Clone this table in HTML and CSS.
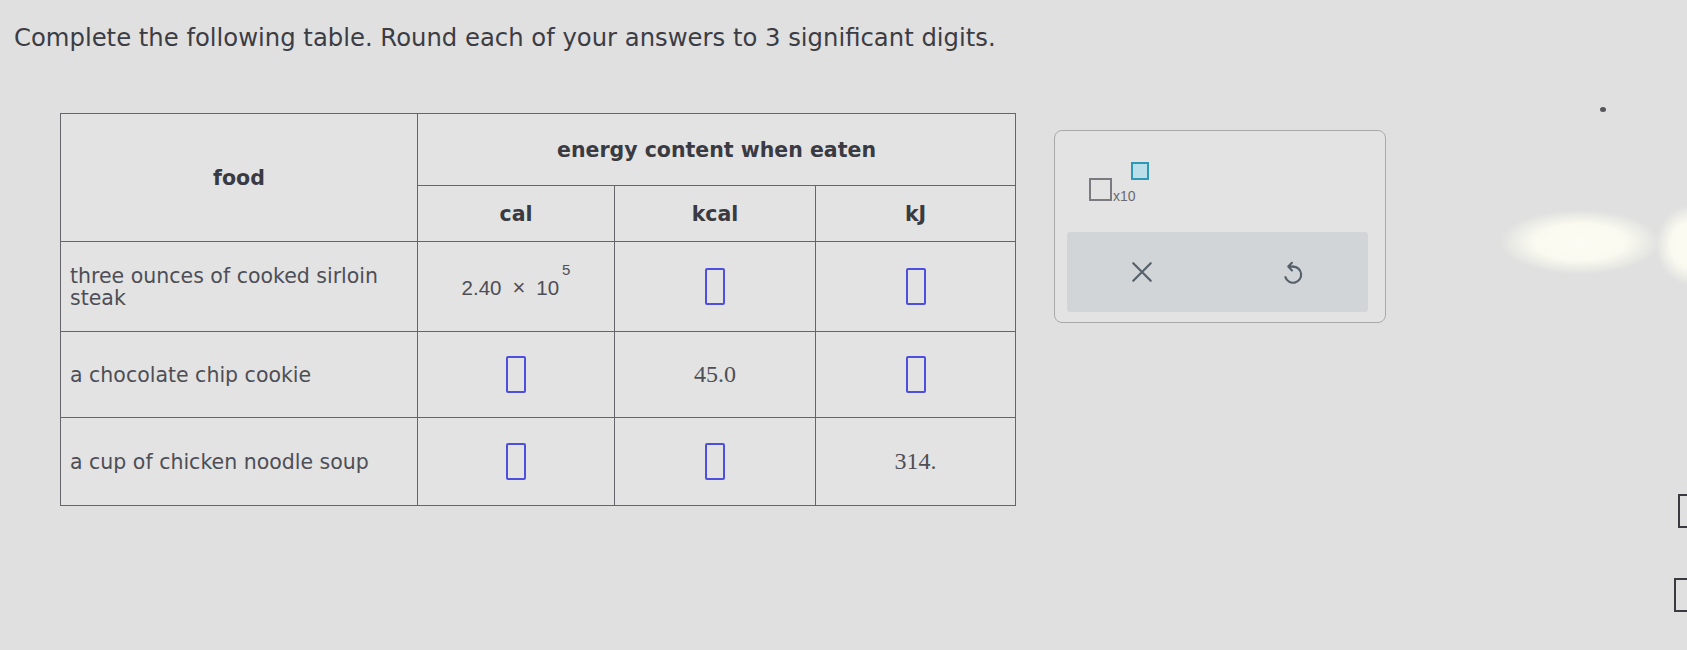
FILE: index.html
```html
<!DOCTYPE html>
<html lang="en">
<head>
<meta charset="utf-8">
<title>Energy content table</title>
<link rel="stylesheet" href="styles.css">
</head>
<body>
<p class="prompt">Complete the following table. Round each of your answers to 3 significant digits.</p>
<div class="workarea">
  <table class="grid">
    <colgroup>
      <col class="c-food"><col class="c-cal"><col class="c-kcal"><col class="c-kj">
    </colgroup>
    <thead>
      <tr class="h1">
        <th rowspan="2">food</th>
        <th colspan="3">energy content when eaten</th>
      </tr>
      <tr class="h2">
        <th>cal</th>
        <th>kcal</th>
        <th>kJ</th>
      </tr>
    </thead>
    <tbody>
      <tr class="r1">
        <td class="name">three ounces of cooked sirloin steak</td>
        <td><span class="num sans">2.40<span class="times">×</span>10<sup>5</sup></span></td>
        <td><span class="box"></span></td>
        <td><span class="box"></span></td>
      </tr>
      <tr class="r2">
        <td class="name">a chocolate chip cookie</td>
        <td><span class="box"></span></td>
        <td><span class="num serif">45.0</span></td>
        <td><span class="box"></span></td>
      </tr>
      <tr class="r3">
        <td class="name">a cup of chicken noodle soup</td>
        <td><span class="box"></span></td>
        <td><span class="box"></span></td>
        <td><span class="num serif">314.</span></td>
      </tr>
    </tbody>
  </table>

  <div class="panel">
    <div class="sci">
      <span class="sq"></span><span class="x10">x10</span><span class="sup-sq"></span>
    </div>
    <div class="bar">
      <button class="tool" aria-label="clear">
        <svg width="24" height="24" viewBox="0 0 22 22"><path d="M3 3 L19 19 M19 3 L3 19" stroke="#56606a" stroke-width="2" fill="none" stroke-linecap="round"/></svg>
      </button>
      <button class="tool" aria-label="undo">
        <svg width="26" height="28" viewBox="0 0 24 26"><path d="M12 8 A7.5 7.5 0 1 1 4.9 17.8" stroke="#56606a" stroke-width="2" fill="none" stroke-linecap="round"/><path d="M12 8 H8.5 M11 4.5 L7.6 8 L11 11.5" stroke="#56606a" stroke-width="2" fill="none" stroke-linecap="round" stroke-linejoin="round"/></svg>
      </button>
    </div>
  </div>
</div>

<span class="glare g1"></span>
<span class="glare g2"></span>
<span class="speck"></span>
<span class="edge e1"></span>
<span class="edge e2"></span>
</body>
</html>
```

FILE: styles.css
```css
html, body {
  margin: 0;
  padding: 0;
}
body {
  width: 1687px;
  height: 650px;
  overflow: hidden;
  background: #dfe0df;
  font-family: "DejaVu Sans", Verdana, sans-serif;
  color: #4a4a4a;
  position: relative;
}
.prompt {
  margin: 0;
  padding: 24px 0 0 14px;
  font-size: 24.3px;
  line-height: 28px;
  color: #3c3c44;
}
.workarea {
  display: flex;
  align-items: flex-start;
  gap: 38px;
  margin: 61px 0 0 60px;
}
.grid {
  border-collapse: collapse;
  width: 955px;
  table-layout: fixed;
  background: #e2e3e2;
}
.c-food { width: 357px; }
.c-cal { width: 197px; }
.c-kcal { width: 201px; }
.c-kj { width: 200px; }
.grid th, .grid td {
  border: 1.5px solid #66656b;
  padding: 0;
  text-align: center;
  vertical-align: middle;
}
.grid th {
  font-weight: bold;
  font-size: 20.5px;
  color: #3a3a42;
}
.h1 { height: 72px; }
.h2 { height: 56px; }
.r1 { height: 90px; }
.r2 { height: 86px; }
.r3 { height: 88px; }
.grid td.name {
  text-align: left;
  padding: 0 12px 0 9px;
  font-size: 20.5px;
  line-height: 22px;
  color: #4e4e56;
}
.box {
  display: inline-block;
  width: 16px;
  height: 33px;
  border: 2px solid #4f4fdf;
  border-radius: 2px;
  vertical-align: middle;
}
.num {
  font-size: 20px;
  color: #4e4e56;
}
.sans {
  font-family: "Liberation Sans", Arial, sans-serif;
  font-size: 20.5px;
  position: relative;
  left: 0;
  top: 1px;
}
.times {
  display: inline-block;
  margin: 0 11px;
  font-size: 22px;
  font-weight: 300;
}
.serif {
  font-family: "Liberation Serif", "Times New Roman", serif;
  font-size: 24px;
}
.num sup {
  font-size: 15px;
  position: relative;
  top: -20px;
  margin-left: 3px;
  vertical-align: baseline;
}
.panel {
  margin-top: 17px;
  width: 332px;
  height: 193px;
  box-sizing: border-box;
  border: 1.5px solid #a9a9ab;
  border-radius: 8px;
  padding: 0 17px 10px 12px;
  display: flex;
  flex-direction: column;
  background: #e2e3e2;
}
.sci {
  height: 101px;
  display: flex;
  align-items: flex-end;
  padding-left: 22px;
  box-sizing: border-box;
  padding-bottom: 31px;
}
.sq {
  width: 19px;
  height: 19px;
  border: 2px solid #7a7a80;
}
.x10 {
  font-family: "Liberation Sans", Arial, sans-serif;
  font-size: 14px;
  color: #6a6a70;
  line-height: 14px;
  margin-left: 1px;
  margin-bottom: -2px;
}
.sup-sq {
  align-self: flex-start;
  margin-top: 31px;
  margin-left: -5px;
  width: 14px;
  height: 14px;
  border: 2px solid #2c98b6;
  background: #b9e0ea;
}
.bar {
  flex: 1;
  display: flex;
  background: #d1d5d8;
  border-radius: 3px;
}
.tool {
  flex: 1;
  border: 0;
  background: transparent;
  display: flex;
  align-items: center;
  justify-content: center;
  padding: 0;
}
.tool svg { display: block; }

.glare {
  position: absolute;
  border-radius: 50%;
  background: radial-gradient(ellipse at center, #fcfcf4 0%, #fafaf0 40%, rgba(240,240,232,0) 72%);
}
.g1 { left: 1500px; top: 210px; width: 160px; height: 64px; }
.g2 { left: 1656px; top: 205px; width: 70px; height: 80px; }
.speck {
  position: absolute;
  left: 1600px;
  top: 107px;
  width: 6px;
  height: 5px;
  border-radius: 50%;
  background: #55555a;
}
.edge {
  position: absolute;
  box-sizing: border-box;
  border: 2px solid #3a3a40;
  border-right: 0;
}
.e1 { left: 1678px; top: 494px; width: 12px; height: 34px; }
.e2 { left: 1674px; top: 578px; width: 16px; height: 34px; }
```
